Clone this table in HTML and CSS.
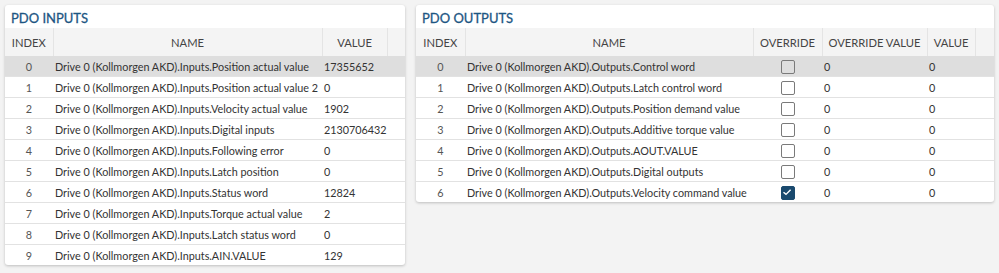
FILE: index.html
```html
<!DOCTYPE html>
<html>
<head>
<meta charset="utf-8">
<link rel="stylesheet" href="styles.css">
</head>
<body>
<div class="page">
  <section class="panel panel-in">
    <h2 class="title">PDO INPUTS</h2>
    <table class="grid">
      <colgroup><col class="c-idx"><col class="c-name-in"><col class="c-val-in"><col class="c-fill"></colgroup>
      <thead><tr><th>INDEX</th><th>NAME</th><th>VALUE</th><th></th></tr></thead>
      <tbody>
        <tr class="sel"><td class="idx">0</td><td class="name">Drive 0 (Kollmorgen AKD).Inputs.Position actual value</td><td class="val">17355652</td><td></td></tr>
        <tr><td class="idx">1</td><td class="name">Drive 0 (Kollmorgen AKD).Inputs.Position actual value 2</td><td class="val">0</td><td></td></tr>
        <tr><td class="idx">2</td><td class="name">Drive 0 (Kollmorgen AKD).Inputs.Velocity actual value</td><td class="val">1902</td><td></td></tr>
        <tr><td class="idx">3</td><td class="name">Drive 0 (Kollmorgen AKD).Inputs.Digital inputs</td><td class="val">2130706432</td><td></td></tr>
        <tr><td class="idx">4</td><td class="name">Drive 0 (Kollmorgen AKD).Inputs.Following error</td><td class="val">0</td><td></td></tr>
        <tr><td class="idx">5</td><td class="name">Drive 0 (Kollmorgen AKD).Inputs.Latch position</td><td class="val">0</td><td></td></tr>
        <tr><td class="idx">6</td><td class="name">Drive 0 (Kollmorgen AKD).Inputs.Status word</td><td class="val">12824</td><td></td></tr>
        <tr><td class="idx">7</td><td class="name">Drive 0 (Kollmorgen AKD).Inputs.Torque actual value</td><td class="val">2</td><td></td></tr>
        <tr><td class="idx">8</td><td class="name">Drive 0 (Kollmorgen AKD).Inputs.Latch status word</td><td class="val">0</td><td></td></tr>
        <tr><td class="idx">9</td><td class="name">Drive 0 (Kollmorgen AKD).Inputs.AIN.VALUE</td><td class="val">129</td><td></td></tr>
      </tbody>
    </table>
  </section>
  <section class="panel panel-out">
    <h2 class="title">PDO OUTPUTS</h2>
    <table class="grid">
      <colgroup><col class="c-idx2"><col class="c-name-out"><col class="c-ovr"><col class="c-ovrval"><col class="c-val-out"><col class="c-fill"></colgroup>
      <thead><tr><th>INDEX</th><th>NAME</th><th>OVERRIDE</th><th>OVERRIDE VALUE</th><th>VALUE</th><th></th></tr></thead>
      <tbody>
        <tr class="sel"><td class="idx">0</td><td class="name">Drive 0 (Kollmorgen AKD).Outputs.Control word</td><td class="chk"><span class="box"></span></td><td class="val">0</td><td class="val">0</td><td></td></tr>
        <tr><td class="idx">1</td><td class="name">Drive 0 (Kollmorgen AKD).Outputs.Latch control word</td><td class="chk"><span class="box"></span></td><td class="val">0</td><td class="val">0</td><td></td></tr>
        <tr><td class="idx">2</td><td class="name">Drive 0 (Kollmorgen AKD).Outputs.Position demand value</td><td class="chk"><span class="box"></span></td><td class="val">0</td><td class="val">0</td><td></td></tr>
        <tr><td class="idx">3</td><td class="name">Drive 0 (Kollmorgen AKD).Outputs.Additive torque value</td><td class="chk"><span class="box"></span></td><td class="val">0</td><td class="val">0</td><td></td></tr>
        <tr><td class="idx">4</td><td class="name">Drive 0 (Kollmorgen AKD).Outputs.AOUT.VALUE</td><td class="chk"><span class="box"></span></td><td class="val">0</td><td class="val">0</td><td></td></tr>
        <tr><td class="idx">5</td><td class="name">Drive 0 (Kollmorgen AKD).Outputs.Digital outputs</td><td class="chk"><span class="box"></span></td><td class="val">0</td><td class="val">0</td><td></td></tr>
        <tr><td class="idx">6</td><td class="name">Drive 0 (Kollmorgen AKD).Outputs.Velocity command value</td><td class="chk"><span class="box checked"><svg viewBox="0 0 14 14" width="14" height="14"><path d="M3.5 7.2 L6 9.4 L10.6 4.8" fill="none" stroke="#fff" stroke-width="1.4"/></svg></span></td><td class="val">0</td><td class="val">0</td><td></td></tr>
      </tbody>
    </table>
  </section>
</div>
</body>
</html>
```

FILE: styles.css
```css
html, body {
  margin: 0;
  padding: 0;
  background: #f3f3f3;
}
body {
  font-family: "Lato", "Open Sans", sans-serif;
  font-size: 10.8px;
  color: #333;
}
.page {
  display: flex;
  align-items: flex-start;
  gap: 11px;
  padding: 5px;
}
.panel {
  background: #fff;
  border-radius: 3px;
  box-shadow: 0 1px 3px rgba(0,0,0,0.22);
  overflow: hidden;
}
.panel-in { width: 400px; }
.panel-out { width: 578px; }
.title {
  margin: 0;
  height: 23px;
  line-height: 26px;
  padding-left: 6px;
  font-size: 13px;
  font-weight: 400;
  -webkit-text-stroke: 0.3px #1d5683;
  color: #1d5683;
}
.grid {
  width: 100%;
  border-collapse: collapse;
  table-layout: fixed;
}
.c-idx { width: 48px; }
.c-name-in { width: 269px; }
.c-val-in { width: 65px; }
.c-fill { width: auto; }
.c-idx2 { width: 49px; }
.c-name-out { width: 288px; }
.c-ovr { width: 69px; }
.c-ovrval { width: 105px; }
.c-val-out { width: 48px; }
.grid th {
  height: 28px;
  padding: 0;
  background: #f4f4f4;
  font-size: 11.2px;
  font-weight: 400;
  color: #444;
  text-align: center;
  border-left: 1px solid #e4e4e4;
  white-space: nowrap;
  overflow: hidden;
}
.grid th:first-child { border-left: none; }
.grid td {
  height: 20px;
  padding: 0;
  border-bottom: 1px solid #e2e2e2;
  white-space: nowrap;
  overflow: hidden;
}
.grid tbody tr:last-child td { border-bottom: none; }
.grid tr.sel td { background: #dedede; }
.idx {
  text-align: center;
  color: #555;
}
.name { padding-left: 2px !important; }
.val { padding-left: 2px !important; }
.chk { text-align: center; }
.box {
  display: inline-block;
  box-sizing: border-box;
  width: 14px;
  height: 14px;
  border: 1.5px solid #7a7a7a;
  border-radius: 2px;
  vertical-align: middle;
  position: relative;
}
.box.checked {
  background: #1a4a6e;
  border-color: #1a4a6e;
}
.box svg {
  position: absolute;
  left: -1.5px;
  top: -1.5px;
}
```
